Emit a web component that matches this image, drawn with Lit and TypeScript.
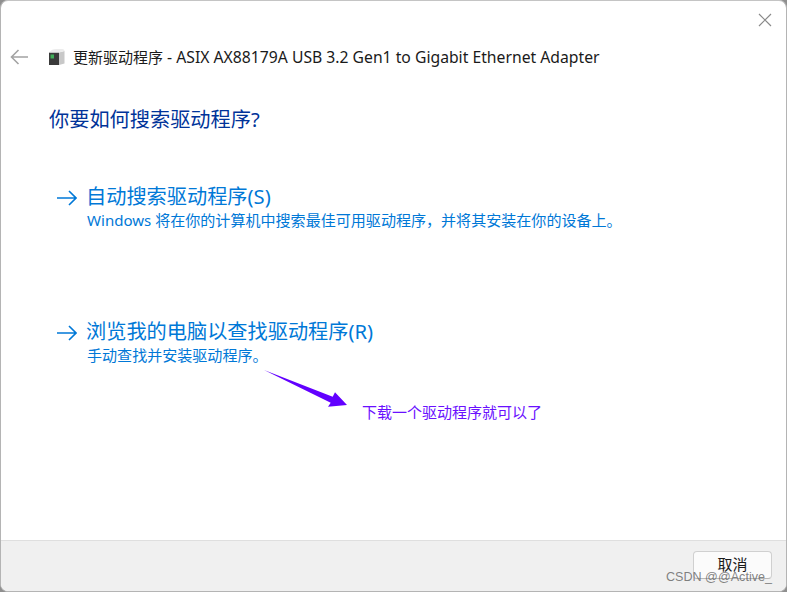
import { LitElement, html, css } from "lit";
import { customElement } from "lit/decorators.js";

@customElement("app-root")
export class AppRoot extends LitElement {
  static styles = css`
    :host { display: block; width: 787px; height: 592px; position: relative; overflow: hidden; background: #8f8f8f;
      font-family: "Noto Sans", "Noto Sans CJK SC", sans-serif; }
    .win { box-sizing: border-box; width: 787px; height: 592px; background: #fff; border: 1px solid #b4b4b4; border-top-color: #c4c4c4; border-radius: 8px; display: flex; flex-direction: column; overflow: hidden; }
    .main { flex: 1; display: flex; flex-direction: column; min-height: 0; }
    .close { display: flex; justify-content: flex-end; padding: 12px 14px 0 0; height: 18px; }
    .top { display: flex; align-items: center; margin-top: 14px; height: 24px; padding-left: 9px; }
    .back { width: 18px; height: 16px; margin-right: 21px; }
    .dev { width: 16px; height: 16px; margin-right: 8px; }
    .title { font-size: 15px; color: #1a1a1a; white-space: nowrap; }
    .title span { font-size: 15.72px; }
    .head { margin: 36px 0 0 48px; font-size: 20.2px; line-height: 28px; color: #003399; white-space: nowrap; }
    .opt { display: flex; margin-left: 56px; color: #0078d7; }
    .opt svg { width: 20px; height: 16px; margin: 8px 10px 0 0; flex: none; }
    .opt.a { margin-top: 49px; }
    .opt.b { margin-top: 87px; }
    .t { font-size: 20.2px; line-height: 28px; white-space: nowrap; margin-left: -1px; }
    .s { font-size: 15.05px; line-height: 20px; white-space: nowrap; }
    .foot { height: 51px; flex: none; box-sizing: border-box; background: #f0f0f0; border-top: 1px solid #dfdfdf; display: flex; justify-content: flex-end; align-items: flex-start; padding: 10px 14px 0 0; }
    .btn { box-sizing: border-box; width: 79px; height: 28px; background: #fbfbfb; border: 1px solid #d0d0d0; border-bottom-color: #b8b8b8; border-radius: 4px; font-size: 15px; line-height: 20px; color: #1a1a1a; display: flex; justify-content: center; padding-top: 2px; }
    .arrow { position: absolute; left: 263px; top: 369px; width: 86px; height: 40px; }
    .note { position: absolute; left: 362px; top: 401px; font-size: 15px; line-height: 22px; color: #6a10ff; white-space: nowrap; }
    .wm { position: absolute; right: 15px; top: 568px; font-size: 12.6px; line-height: 18px; color: rgba(90,90,90,.75); white-space: nowrap; font-family: "Liberation Sans", sans-serif; }
  `;

  private option(cls: string, title: string, sub: string) {
    return html`<div class="opt ${cls}">
      <svg viewBox="0 0 20 16" fill="none" stroke="#0078d7" stroke-width="1.6"><path d="M0 8H19M12 1l7 7-7 7" /></svg>
      <div><div class="t">${title}</div><div class="s">${sub}</div></div>
    </div>`;
  }

  render() {
    return html`<div class="win">
        <div class="main">
          <div class="close">
            <svg width="14" height="14" viewBox="0 0 14 14" stroke="#8a8a8a" stroke-width="1.2"><path d="M1 1l12 12M13 1L1 13" /></svg>
          </div>
          <div class="top">
            <svg class="back" viewBox="0 0 18 16" fill="none" stroke="#a3a3a3" stroke-width="1.6"><path d="M18 8H1.5M8.5 1l-7 7 7 7" /></svg>
            <svg class="dev" viewBox="0 0 16 16">
              <path d="M0 3.5h10V16H0z" fill="#3a3a3a" />
              <path d="M10 3.5l5.5-1.5V14.5L10 16z" fill="#c8c8c8" />
              <path d="M0 3.5C2 1 4 0 7 0h6c2 0 2.5 1 2.5 2L10 3.5z" fill="#ececec" />
              <path d="M1.5 5.5h3.5v4H1.5z" fill="#3fae58" />
            </svg>
            <span class="title">更新驱动程序<span> - ASIX AX88179A USB 3.2 Gen1 to Gigabit Ethernet Adapter</span></span>
          </div>
          <div class="head">你要如何搜索驱动程序?</div>
          ${this.option("a", "自动搜索驱动程序(S)", "Windows 将在你的计算机中搜索最佳可用驱动程序，并将其安装在你的设备上。")}
          ${this.option("b", "浏览我的电脑以查找驱动程序(R)", "手动查找并安装驱动程序。")}
        </div>
        <div class="foot"><div class="btn">取消</div></div>
      </div>
      <svg class="arrow" viewBox="0 0 86 40"><path d="M1 1L69.7 27.7L72 23.3L84 36L65 37.7L67.7 33.7Z" fill="#6200ff" /></svg>
      <div class="note">下载一个驱动程序就可以了</div>
      <div class="wm">CSDN @@Active_</div>`;
  }
}
